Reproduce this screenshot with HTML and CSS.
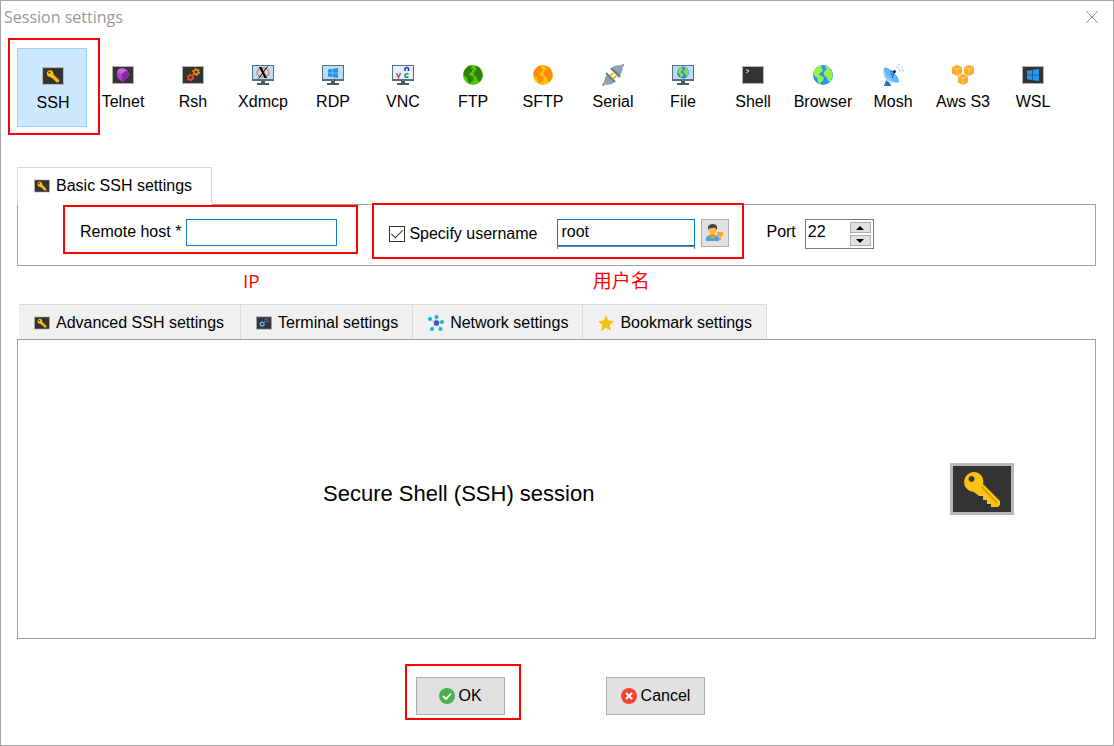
FILE: index.html
```
<!DOCTYPE html>
<html lang="en">
<head>
    <meta charset="UTF-8">
    <meta name="viewport" content="width=device-width, initial-scale=1.0">
    <title>Session settings</title>
    <link rel="stylesheet" href="styles.css">
</head>
<body>

<!-- Shared icons -->
<svg class="sprite" aria-hidden="true">
    <symbol id="screen" viewBox="0 0 22 22">
        <rect x="0.5" y="2.5" width="21" height="17" fill="#333" stroke="#b4b4b4"/>
    </symbol>
    <symbol id="key" viewBox="0 0 64 52">
        <rect x="1.5" y="1.5" width="61" height="49" fill="#333" stroke="#b8b8b8" stroke-width="3"/>
        <path fill="#fbc116" fill-rule="evenodd" d="M24 9a9.500 9.500 0 0 1 9 12l17 17v4l-2 2h-7v-3h-4v-4h-4v-4h-4l-5-4a9.500 9.500 0 1 1 0-20zM21.500 13a3 3 0 1 0 .1 0z"/>
        <path d="M32 24L47 40" stroke="#e0a000" stroke-width="2"/>
    </symbol>
    <symbol id="monitor" viewBox="0 0 22 22">
        <path d="M0 1h22v16H0z" fill="#546e7a"/>
        <path d="M1 2h20v13H1z" fill="#bbdefb"/>
        <path d="M9 17h4v2h4v2H5v-2h4z" fill="#455a64"/>
    </symbol>
    <symbol id="gear" viewBox="0 0 10 10">
        <circle cx="5" cy="5" r="2.700" fill="none" stroke="currentColor" stroke-width="1.800"/>
        <circle cx="5" cy="5" r="4.200" fill="none" stroke="currentColor" stroke-width="1.500" stroke-dasharray="2.200 2.198"/>
    </symbol>
    <symbol id="land" viewBox="0 0 20 20">
        <path d="M1 6l4-5 4-.500-1 3 2 .500-1 3-2 1-1 2 3 1 2 2-1 3-2 1-1 2.500-2-3-1-4-3-2-.500-2zM12 1l4 1 3 5 .500 4-1 3-2 3-2-2-1-3-2-1-1-3 2-3 2-1-2-1z" fill="currentColor"/>
    </symbol>
    <symbol id="win" viewBox="0 0 10 10">
        <path d="M0 1.500l4.500-.7v4H0zM5 .7L10 0v4.800H5zM0 5.300h4.500v4L0 8.600zM5 5.300h5V10l-5-.7z" fill="#2196f3"/>
    </symbol>
    <symbol id="cube" viewBox="0 0 10 11">
        <path d="M5 0l5 2v6.500L5 11 0 8.500V2z" fill="#fbab28"/>
        <path d="M0 2.200l5 2 5-2M5 4.200V11" fill="none" stroke="#ffe3b3" stroke-width="0.600"/>
    </symbol>
</svg>

<main class="window">
    <header class="titlebar">
        <h1>Session settings</h1>
        <button class="close" aria-label="Close">
            <svg width="12" height="12" viewBox="0 0 12 12"><path d="M0 0l12 12M12 0L0 12" stroke="#909090" fill="none"/></svg>
        </button>
    </header>

    <!-- Session types -->
    <nav class="toolbar">
        <button class="tool selected marked">
            <svg viewBox="0 0 64 64"><use href="#key" y="6" width="64" height="52"/></svg>
            SSH
        </button>
        <button class="tool">
            <svg viewBox="0 0 22 22"><use href="#screen"/><path d="M10.500 4l5 2 2 5-3 4-4 3-5-4-1-5 2-3z" fill="#ab47bc"/><path d="M5 8l5 2 5-4-4.500-2-4 1z" fill="#ce62dc"/><path d="M10 10l5-4 2 5-3 4-4 3z" fill="#8e24aa"/></svg>
            Telnet
        </button>
        <button class="tool">
            <svg viewBox="0 0 22 22"><use href="#screen"/><use href="#gear" x="10" y="4" width="8" height="8" color="#fb9a0a"/><use href="#gear" x="4.500" y="9.500" width="8" height="8" color="#f4511e"/></svg>
            Rsh
        </button>
        <button class="tool">
            <svg viewBox="0 0 22 22"><use href="#monitor"/><ellipse cx="11" cy="8.500" rx="6" ry="4.500" fill="none" stroke="#f0825a" stroke-width="1.500"/><path d="M7 3h2.500l5.500 11h-2.500z"/><path d="M15.500 2.500L6.500 14.500" stroke="#000"/></svg>
            Xdmcp
        </button>
        <button class="tool">
            <svg viewBox="0 0 22 22"><use href="#monitor"/><use href="#win" x="6" y="4" width="10" height="10"/></svg>
            RDP
        </button>
        <button class="tool">
            <svg viewBox="0 0 22 22"><use href="#monitor"/><path d="M1 2h20v13H1z" fill="#e3f2fd"/><g fill="none" stroke-width="1.500"><path d="M4.500 9l2 4.500 2-4.500" stroke="#e53935"/><path d="M13 7V4.500q2-2 3.500 0V7" stroke="#2a2ad8"/><path d="M16.500 10q-3.500-1-3.500 1.500t3.500 1.500" stroke="#159a2c"/></g></svg>
            VNC
        </button>
        <button class="tool">
            <svg viewBox="0 0 22 22"><circle cx="11" cy="11" r="10" fill="#4fc90a"/><use href="#land" x="1" y="1" width="20" height="20" color="#2f7f0b"/></svg>
            FTP
        </button>
        <button class="tool">
            <svg viewBox="0 0 22 22"><circle cx="11" cy="11" r="10" fill="#ffc107"/><use href="#land" x="1" y="1" width="20" height="20" color="#fb8c00"/></svg>
            SFTP
        </button>
        <button class="tool">
            <svg viewBox="0 0 22 22"><path d="M0 22l4-4M18 4l4-4" stroke="#90a4ae" stroke-width="2.500"/><path d="M3 13l3-3 7 7-3 3-6 1-2-3zM9 5l3-3 6-1 3 3-2 6-3 3z" fill="#90a4ae"/><path d="M4 9l9 9M9 4l9 9" stroke="#607d8b" stroke-width="2"/><path d="M8 12l3-3M11 15l3-3" stroke="#ffb300" stroke-width="2"/></svg>
            Serial
        </button>
        <button class="tool">
            <svg viewBox="0 0 22 22"><use href="#monitor"/><circle cx="11" cy="8.500" r="6" fill="#1e88e5"/><use href="#land" x="5" y="2.500" width="12" height="12" color="#8bd84c"/></svg>
            File
        </button>
        <button class="tool">
            <svg viewBox="0 0 22 22"><use href="#screen"/><path d="M4 5.500l3 1.500-3 2" stroke="#ddd" fill="none"/></svg>
            Shell
        </button>
        <button class="tool">
            <svg viewBox="0 0 22 22"><circle cx="11" cy="11" r="10" fill="#2196f3"/><use href="#land" x="1" y="1" width="20" height="20" color="#9cec4c"/></svg>
            Browser
        </button>
        <button class="tool">
            <svg viewBox="0 0 22 22"><path d="M4 16l-2 6h7l-1-3z" fill="#1976d2"/><path d="M2 4Q0 12 5 16t12 2z" fill="#90caf9"/><ellipse cx="9.500" cy="11" rx="3.500" ry="10" transform="rotate(-46 9.500 11)" fill="#64b5f6"/><path d="M8 8l5-1-3 7M13 7l-4 4" stroke="#0d3c8c" stroke-width="0.800" fill="none"/><circle cx="12.500" cy="7.500" r="1.500" fill="#1a237e"/><path d="M14 3q4 0 4 5M15 0q6 1 6 8" stroke="#90caf9" fill="none" stroke-dasharray="3 1"/></svg>
            Mosh
        </button>
        <button class="tool">
            <svg viewBox="0 0 22 22"><use href="#cube" x="0" y="1" width="10" height="11"/><use href="#cube" x="12" y="1" width="10" height="11"/><use href="#cube" x="6" y="10" width="10" height="11"/></svg>
            Aws S3
        </button>
        <button class="tool">
            <svg viewBox="0 0 22 22"><use href="#screen"/><use href="#win" x="5" y="5" width="12" height="12"/></svg>
            WSL
        </button>
    </nav>

    <!-- Basic settings -->
    <div class="tabs basic-tabs">
        <button class="tab active-tab">
            <svg viewBox="0 0 64 64"><use href="#key" y="6" width="64" height="52"/></svg>
            Basic SSH settings
        </button>
    </div>
    <form class="basic-panel">
        <div class="field host marked">
            <label for="host">Remote host *</label>
            <input type="text" id="host">
        </div>
        <div class="field user marked">
            <input type="checkbox" id="specify" checked>
            <label for="specify">Specify username</label>
            <div class="combo">
                <input type="text" id="username" aria-label="Username" value="root">
            </div>
            <button type="button" class="user-button" aria-label="Manage users">
                <svg width="18" height="18" viewBox="0 0 18 18"><path d="M0 17v-3q1-3 5-3h3q4 0 5 3v3z" fill="#42a5f5"/><path d="M4 10h5v3l-2.500 2L4 13z" fill="#ff9800"/><circle cx="6.500" cy="6" r="4" fill="#ffb74d"/><path d="M2 6Q1 0 7 0q5 0 4 6L9 3.500 3 4.500z" fill="#424242"/><path d="M11 8h6v4h-2v4h-2v-4h-2z" fill="#f9a825"/></svg>
            </button>
        </div>
        <div class="field port">
            <label for="port">Port</label>
            <div class="spinner">
                <input type="text" id="port" inputmode="numeric" value="22">
                <div class="steps">
                    <button type="button" aria-label="Increase"><svg width="8" height="4" viewBox="0 0 8 4"><path d="M0 4l4-4 4 4z"/></svg></button>
                    <button type="button" aria-label="Decrease"><svg width="8" height="4" viewBox="0 0 8 4"><path d="M0 0l4 4 4-4z"/></svg></button>
                </div>
            </div>
        </div>
    </form>

    <div class="notes">
        <span>IP</span>
        <span>用户名</span>
    </div>

    <!-- Other settings -->
    <div class="tabs">
        <button class="tab">
            <svg viewBox="0 0 64 64"><use href="#key" y="6" width="64" height="52"/></svg>
            Advanced SSH settings
        </button>
        <button class="tab">
            <svg viewBox="0 0 22 22"><use href="#screen"/><use href="#gear" x="11" y="4" width="7" height="7" color="#5c6bc0"/><use href="#gear" x="4" y="8" width="9" height="9" color="#64b5f6"/></svg>
            Terminal settings
        </button>
        <button class="tab">
            <svg viewBox="0 0 16 16"><path d="M8 8L2 4M8 8V2M8 8l6-1M8 8l5 6M8 8l-4 6" stroke="#b0bec5"/><g fill="#00bcd4"><circle cx="2" cy="4" r="2"/><circle cx="8.500" cy="2" r="2"/><circle cx="14" cy="7" r="2"/><circle cx="12.500" cy="14" r="2"/><circle cx="4" cy="14" r="2"/></g><circle cx="8.500" cy="8" r="2.700" fill="#3f51b5"/></svg>
            Network settings
        </button>
        <button class="tab">
            <svg viewBox="0 0 16 16"><path d="M8 0l2.300 5.500 5.700.5-4.300 4 1.300 6-5-3.200L3 16l1.300-6L0 6l5.700-.5z" fill="#f4c20d"/></svg>
            Bookmark settings
        </button>
    </div>
    <section class="session-panel">
        <h2>Secure Shell (SSH) session</h2>
        <svg width="64" height="52" viewBox="0 0 64 52"><use href="#key" width="64" height="52"/></svg>
    </section>

    <footer class="actions">
        <div class="marked ok-mark">
            <button class="action ok">
                <svg width="16" height="16" viewBox="0 0 16 16"><circle cx="8" cy="8" r="8" fill="#4caf50"/><path d="M4 8l3 3 5-5.500" stroke="#fff" stroke-width="1.800" fill="none"/></svg>
                OK
            </button>
        </div>
        <button class="action">
            <svg width="16" height="16" viewBox="0 0 16 16"><circle cx="8" cy="8" r="8" fill="#f44336"/><path d="M5 5l6 6M11 5l-6 6" stroke="#fff" stroke-width="2"/></svg>
            Cancel
        </button>
    </footer>
</main>

</body>
</html>
```
FILE: styles.css
```
/* General reset */
* {
    margin: 0;
    padding: 0;
    box-sizing: border-box;
}

body {
    font-family: "Liberation Sans", Arial, sans-serif;
    font-size: 16px;
    line-height: 20px;
    background-color: #fff;
    color: #000;
}

button,
input {
    font: inherit;
    color: inherit;
}

svg {
    display: block;
    flex: none;
}

.sprite {
    position: absolute;
    width: 0;
    height: 0;
}

.window {
    display: flex;
    flex-direction: column;
    min-height: 100vh;
    padding: 0 17px 30px 16px;
    border: 1px solid #a5a5a5;
}

/* Title bar */
.titlebar {
    display: flex;
    justify-content: space-between;
    align-items: center;
    height: 31px;
    margin: 0 -2px 16px -13px;
}

.titlebar h1 {
    font-family: "Open Sans", "Noto Sans", sans-serif;
    font-size: 16px;
    font-weight: normal;
    color: #999;
}

.close {
    border: none;
    background: none;
}

/* Red frames around the fields to fill in */
.marked {
    position: relative;
}

.marked::after {
    content: "";
    position: absolute;
    inset: -10px -14px -9px -10px;
    border: 2px solid #f00;
    pointer-events: none;
}

/* Session types */
.toolbar {
    display: flex;
    height: 79px;
    margin-bottom: 40px;
}

.tool {
    display: flex;
    flex-direction: column;
    align-items: center;
    gap: 6px;
    width: 70px;
    padding: 16px 0 0 2px;
    border: none;
    background: none;
    white-space: nowrap;
}

.tool svg {
    width: 22px;
    height: 22px;
}

.tool.selected {
    border: 1px solid #99d1ff;
    background-color: #cce8ff;
}

.tool.marked::after {
    inset: -11px -14px -9px -10px;
}

/* Tabs */
.tabs {
    display: flex;
    padding-left: 2px;
}

.tab {
    display: flex;
    align-items: center;
    gap: 6px;
    height: 35px;
    padding: 1px 14px 0 15px;
    border: 1px solid #d9d9d9;
    border-width: 1px 1px 0 0;
    background-color: #f0f0f0;
}

.tab:first-child {
    padding-right: 16px;
}

.tab svg {
    width: 16px;
    height: 16px;
}

.basic-tabs {
    padding-left: 0;
}

.tab.active-tab {
    position: relative;
    height: 38px;
    margin-bottom: -1px;
    padding: 0 19px 2px 16px;
    border-left-width: 1px;
    background-color: #fff;
}

/* Basic settings */
.basic-panel {
    display: flex;
    align-items: flex-start;
    height: 62px;
    padding: 14px 0 0 62px;
    border: 1px solid #a0a0a0;
}

.field {
    display: flex;
    align-items: flex-start;
}

.field label {
    line-height: 26px;
    white-space: nowrap;
}

.host {
    gap: 5px;
}

.host input {
    width: 151px;
    height: 27px;
    padding: 0 3px;
    border: 1px solid #1a78c4;
}

.host::after {
    inset: -14px -21px -8px -17px;
}

.user {
    margin-left: 52px;
}

.user label {
    padding: 2px 20px 0 4px;
}

.user::after {
    inset: -16px -15px -10px -17px;
}

.user input[type="checkbox"] {
    display: flex;
    justify-content: center;
    width: 16px;
    height: 16px;
    margin-top: 7px;
    border: 1px solid #333;
    appearance: none;
}

.user input[type="checkbox"]:checked::after {
    content: "";
    width: 5px;
    height: 10px;
    border: solid #333;
    border-width: 0 1px 1px 0;
    transform: rotate(45deg);
}

.combo {
    width: 138px;
    height: 30px;
    border: 1px solid #7a7a7a;
    border-width: 0 1px;
}

.combo input {
    display: block;
    width: 138px;
    height: 27px;
    margin-left: -1px;
    padding: 0 3px 1px;
    border: 1px solid #0078d7;
    box-shadow: 0 1px #7a7a7a;
}

.user-button {
    display: grid;
    place-items: center;
    width: 28px;
    height: 28px;
    margin-left: 6px;
    border: 1px solid #adadad;
    background-color: #e1e1e1;
}

.port {
    gap: 9px;
    margin-left: 37px;
}

.spinner {
    display: flex;
    width: 69px;
    height: 30px;
    padding: 2px;
    border: 1px solid #7a7a7a;
}

.spinner input {
    width: 42px;
    height: 20px;
    border: none;
    outline: none;
}

.steps {
    display: flex;
    flex-direction: column;
    gap: 2px;
}

.steps button {
    display: grid;
    place-items: center;
    width: 21px;
    height: 11px;
    border: 1px solid #adadad;
    background-color: #e1e1e1;
}

/* Red captions under the fields */
.notes {
    display: flex;
    gap: 333px;
    height: 38px;
    padding-left: 226px;
    font-family: "Open Sans", "Noto Sans CJK SC", sans-serif;
    font-size: 19px;
    line-height: 30px;
    color: #f00;
}

/* Session panel */
.session-panel {
    display: flex;
    flex: 1;
    justify-content: space-between;
    align-items: center;
    padding: 0 81px 0 305px;
    border: 1px solid #a0a0a0;
}

.session-panel h2 {
    padding-top: 10px;
    font-size: 22px;
    font-weight: normal;
}

/* Buttons */
.actions {
    display: flex;
    justify-content: center;
    gap: 101px;
    padding: 38px 0 0 8px;
}

.action {
    display: flex;
    justify-content: center;
    align-items: center;
    gap: 4px;
    min-width: 89px;
    height: 38px;
    padding: 0 14px;
    border: 1px solid #adadad;
    background-color: #e1e1e1;
}

.ok-mark::after {
    inset: -13px -16px -5px -11px;
}
```
